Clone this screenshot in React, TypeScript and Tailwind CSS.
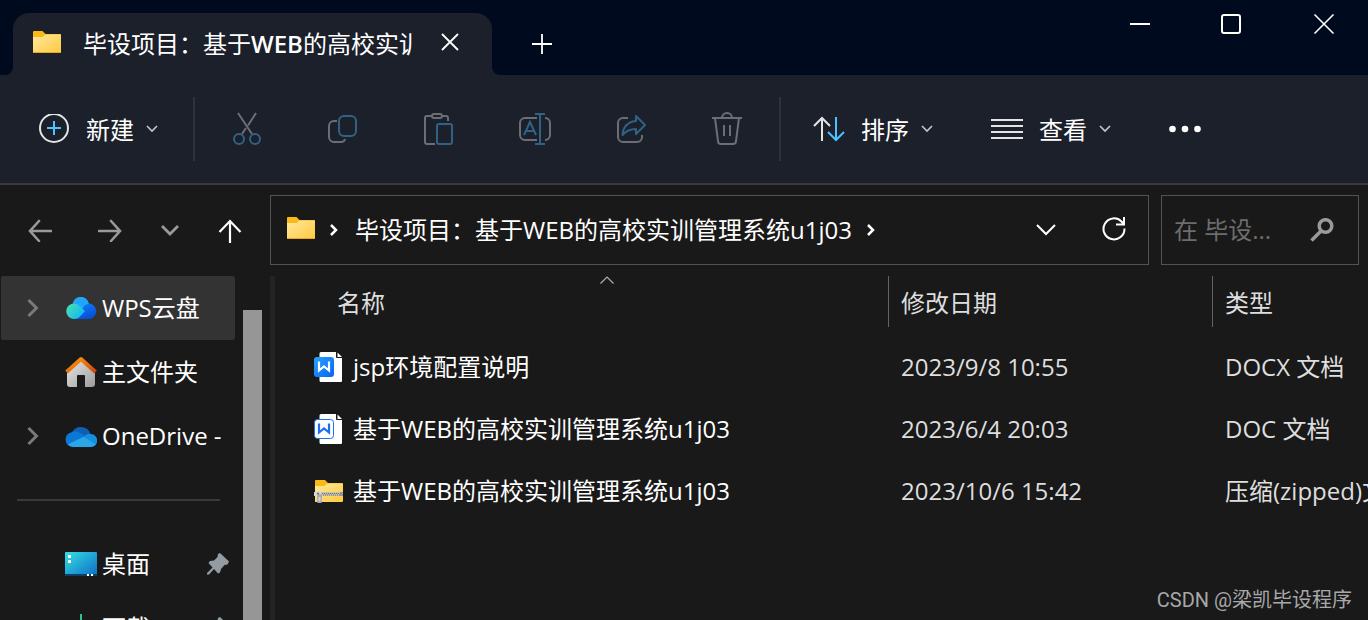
import type { ReactNode } from "react";

const places = [
    { id: "wps", label: "WPS云盘", icon: <WpsCloudIcon />, expandable: true, active: true, pinned: false },
    { id: "home", label: "主文件夹", icon: <HomeIcon />, expandable: false, active: false, pinned: false },
    { id: "onedrive", label: "OneDrive -", icon: <OneDriveIcon />, expandable: true, active: false, pinned: false },
];

const quickAccess = [
    { id: "desktop", label: "桌面", icon: <DesktopIcon />, expandable: false, active: false, pinned: true },
    { id: "downloads", label: "下载", icon: <DownloadIcon />, expandable: false, active: false, pinned: true },
];

const files = [
    { id: 1, name: "jsp环境配置说明", date: "2023/9/8 10:55", type: "DOCX 文档", icon: <DocIcon filled /> },
    { id: 2, name: "基于WEB的高校实训管理系统u1j03", date: "2023/6/4 20:03", type: "DOC 文档", icon: <DocIcon /> },
    { id: 3, name: "基于WEB的高校实训管理系统u1j03", date: "2023/10/6 15:42", type: "压缩(zipped)文件夹", icon: <ZipIcon /> },
];

export default function App() {
    return (
        <div className="relative flex h-screen flex-col overflow-hidden bg-[#191919] font-['Open_Sans','Noto_Sans_CJK_SC',sans-serif] text-2xl leading-8 text-white">
            <TitleBar />
            <Toolbar />
            <NavigationBar />
            <div className="flex min-h-0 flex-1">
                <Sidebar />
                <FileList />
            </div>
            <div className="absolute right-4 bottom-1 font-['Roboto','Noto_Sans_CJK_SC',sans-serif] text-xl leading-8 text-[#a8a8a8]">
                CSDN @梁凯毕设程序
            </div>
        </div>
    );
}

function TitleBar() {
    return (
        <header className="flex h-[75px] shrink-0 items-end bg-[#000a1e] pl-[5px]">
            <span className="size-2 bg-[#1b202b]">
                <span className="block size-2 rounded-br-lg bg-[#000a1e]" />
            </span>
            <div className="flex h-[62px] w-[479px] items-center rounded-t-2xl bg-[#1b202b] pb-1 pl-5">
                <FolderIcon />
                <span className="ml-[22px] w-[329px] overflow-hidden pt-1 whitespace-nowrap">
                    毕设项目：基于<span className="font-semibold">WEB</span>的高校实训管理系统u1j03
                </span>
                <button type="button" aria-label="关闭标签页" className="ml-7">
                    <svg className="size-5" viewBox="0 0 20 20" fill="none" stroke="currentColor" strokeWidth={1.8}>
                        <path d="M2 2l16 16M18 2L2 18" />
                    </svg>
                </button>
            </div>
            <span className="size-2 bg-[#1b202b]">
                <span className="block size-2 rounded-bl-lg bg-[#000a1e]" />
            </span>
            <button type="button" aria-label="新标签页" className="ml-8 self-center pt-3">
                <svg className="size-5" viewBox="0 0 20 20" fill="none" stroke="currentColor" strokeWidth={1.8}>
                    <path d="M10 0v20M0 10h20" />
                </svg>
            </button>
            <div className="ml-auto flex gap-[70px] self-start pt-[13px] pr-[33px]">
                <button type="button" aria-label="最小化">
                    <svg className="size-[22px]" viewBox="0 0 22 22" stroke="currentColor" strokeWidth={2}>
                        <path d="M1 11h20" />
                    </svg>
                </button>
                <button type="button" aria-label="最大化">
                    <svg className="size-[22px]" viewBox="0 0 22 22" fill="none" stroke="currentColor" strokeWidth={2}>
                        <rect x="1" y="2" width="18" height="18" rx="2" />
                    </svg>
                </button>
                <button type="button" aria-label="关闭">
                    <svg className="size-[22px]" viewBox="0 0 22 22" stroke="currentColor" strokeWidth={1.6}>
                        <path d="M1.500 1.500l19 19M20.500 1.500l-19 19" />
                    </svg>
                </button>
            </div>
        </header>
    );
}

function Toolbar() {
    return (
        <div className="flex h-[110px] shrink-0 items-center border-b-2 border-[#3a3a3a] bg-[#1b202b] pl-[39px]">
            <MenuButton label="新建">
                <svg className="mr-px size-[30px]" viewBox="0 0 30 30" fill="none" strokeWidth={2}>
                    <circle cx="15" cy="14" r="14" stroke="#e4e4e4" />
                    <path d="M15 7v14M8 14h14" stroke="#4cc2ff" />
                </svg>
            </MenuButton>
            <div className="ml-[35px] h-16 w-[2px] bg-[#2e323d]" />
            <div className="mx-1 flex">
                <ToolButton label="剪切">
                    <path d="M6 1l14 21M24 1l-8 12.500M14 16l-4 6" stroke="#6b6e75" />
                    <circle cx="7" cy="27" r="5" stroke="#2f6285" />
                    <circle cx="23" cy="27" r="5" stroke="#2f6285" />
                </ToolButton>
                <ToolButton label="复制">
                    <path d="M9 9H6a5 5 0 0 0-5 5v11a5 5 0 0 0 5 5h7a4 4 0 0 0 4-3" stroke="#6b6e75" />
                    <rect x="11" y="4" width="17" height="20" rx="5" stroke="#2f6285" />
                </ToolButton>
                <ToolButton label="粘贴">
                    <path d="M8 4H3a2 2 0 0 0-2 2v24a2 2 0 0 0 2 2h8M18 4h4a2 2 0 0 1 2 2v3" stroke="#6b6e75" />
                    <rect x="8" y="2" width="10" height="4" rx="2" stroke="#6b6e75" />
                    <rect x="13" y="12" width="15" height="20" rx="2" stroke="#2f6285" />
                </ToolButton>
                <ToolButton label="重命名">
                    <path d="M17 6H5a5 5 0 0 0-5 5v12a5 5 0 0 0 5 5h12M25 6a5 5 0 0 1 5 5v12a5 5 0 0 1-5 5" stroke="#6b6e75" />
                    <path d="M20 2v30M15 2h10M15 32h10M4 23l6-13 6 13M6 19h8" stroke="#2f6285" />
                </ToolButton>
                <ToolButton label="共享">
                    <path d="M12 6H7a5 5 0 0 0-5 5v14a5 5 0 0 0 5 5h14a5 5 0 0 0 5-5v-2" stroke="#6b6e75" />
                    <path d="M20 4l9 9-9 9v-5c-6 0-10 2-13.500 6C7 15 12 10 20 9z" stroke="#2f6285" strokeLinejoin="round" />
                </ToolButton>
                <ToolButton label="删除">
                    <path d="M0 6h30M10 6a5 5 0 0 1 10 0M3 6l3 23a3 3 0 0 0 3 3h12a3 3 0 0 0 3-3l3-23M12 13v11M18 13v11" stroke="#6b6e75" />
                </ToolButton>
            </div>
            <div className="h-16 w-[2px] bg-[#2e323d]" />
            <div className="ml-8 flex gap-[58px]">
                <MenuButton label="排序">
                    <svg className="h-7 w-8" viewBox="0 0 32 28" fill="none" strokeWidth={2}>
                        <path d="M9 26V3M1 11l8-8 8 8" stroke="#e4e4e4" />
                        <path d="M23 2v23M15 17l8 8 8-8" stroke="#4cc2ff" />
                    </svg>
                </MenuButton>
                <MenuButton label="查看">
                    <svg className="h-6 w-8" viewBox="0 0 32 24" stroke="#e4e4e4" strokeWidth={2}>
                        <path d="M0 3h32M0 9h32M0 15h32M0 21h32" />
                    </svg>
                </MenuButton>
                <button type="button" aria-label="更多">
                    <svg className="h-2 w-8" viewBox="0 0 32 8" fill="currentColor">
                        <circle cx="3.500" cy="4" r="3.300" />
                        <circle cx="16" cy="4" r="3.300" />
                        <circle cx="28.500" cy="4" r="3.300" />
                    </svg>
                </button>
            </div>
        </div>
    );
}

function MenuButton({ label, children }: { label: string; children: ReactNode }) {
    return (
        <button type="button" className="flex items-center gap-3 whitespace-nowrap">
            <span className="flex items-center gap-4">
                {children}
                <span className="pt-[2px]">{label}</span>
            </span>
            <svg className="size-3" viewBox="0 0 12 12" fill="none" stroke="#c4c6ca" strokeWidth={1.6}>
                <path d="M1 3l5 5 5-5" />
            </svg>
        </button>
    );
}

function ToolButton({ label, children }: { label: string; children: ReactNode }) {
    return (
        <button type="button" aria-label={label} className="flex w-24 justify-center">
            <svg className="h-[34px] w-[30px] overflow-visible" viewBox="0 0 30 34" fill="none" strokeWidth={2}>
                {children}
            </svg>
        </button>
    );
}

function NavigationBar() {
    return (
        <nav className="flex h-[91px] shrink-0 items-center pr-[9px] pb-[2px] pl-7">
            <button type="button" aria-label="后退" className="text-[#9a9a9a]">
                <svg className="size-6" viewBox="0 0 24 24" fill="none" stroke="currentColor" strokeWidth={2.600} strokeLinecap="round">
                    <path d="M23 13H2M11 3L2 13l9 10" />
                </svg>
            </button>
            <button type="button" aria-label="前进" className="ml-[46px] text-[#9a9a9a]">
                <svg className="size-6" viewBox="0 0 24 24" fill="none" stroke="currentColor" strokeWidth={2.600} strokeLinecap="round">
                    <path d="M1 13h21M13 3l9 10-9 10" />
                </svg>
            </button>
            <button type="button" aria-label="最近浏览的位置" className="ml-9 text-[#9a9a9a]">
                <svg className="size-6" viewBox="0 0 24 24" fill="none" stroke="currentColor" strokeWidth={2.800}>
                    <path d="M4 8l8 8 8-8" />
                </svg>
            </button>
            <button type="button" aria-label="向上" className="ml-9">
                <svg className="size-6 overflow-visible" viewBox="0 0 24 24" fill="none" stroke="currentColor" strokeWidth={2.200}>
                    <path d="M12 25V3M1.500 14L12 3l10.500 11" />
                </svg>
            </button>
            <div className="ml-7 flex h-[70px] min-w-0 flex-1 items-center border border-[#535353] pr-[22px] pl-4">
                <span className="pb-[3px]">
                    <FolderIcon />
                </span>
                <Crumb />
                <span className="whitespace-nowrap">毕设项目：基于WEB的高校实训管理系统u1j03</span>
                <Crumb />
                <button type="button" aria-label="历史记录" className="ml-auto">
                    <svg className="size-6" viewBox="0 0 24 24" fill="none" stroke="currentColor" strokeWidth={2}>
                        <path d="M3 7l9 9 9-9" />
                    </svg>
                </button>
                <button type="button" aria-label="刷新" className="ml-11">
                    <svg className="size-6 overflow-visible" viewBox="0 0 24 24" fill="none" stroke="currentColor" strokeWidth={2}>
                        <path d="M22.500 10.500A10.500 10.500 0 1 1 19.500 3.500L22 6.500M22 -1v7.500h-8" />
                    </svg>
                </button>
            </div>
            <div className="ml-3 flex h-[70px] w-[198px] items-center border border-[#535353] pr-6 pl-3">
                <input
                    type="text"
                    aria-label="搜索"
                    placeholder="在 毕设..."
                    className="min-w-0 flex-1 bg-transparent outline-none placeholder:text-[#6d6d6d]"
                />
                <svg className="size-6" viewBox="0 0 24 24" fill="none" stroke="#9a9a9a" strokeWidth={3.500}>
                    <circle cx="15.500" cy="8" r="6.300" />
                    <path d="M11 13L1.500 22.500" />
                </svg>
            </div>
        </nav>
    );
}

function Crumb() {
    return (
        <svg className="mx-[14px] size-3 shrink-0" viewBox="0 0 12 12" fill="none" stroke="currentColor" strokeWidth={2.500}>
            <path d="M2 1l5 5-5 5" />
        </svg>
    );
}

function Sidebar() {
    return (
        <aside className="flex shrink-0 overflow-hidden border-r-[5px] border-[#232323] pr-2">
            <ul className="w-[235px] pl-px">
                {places.map((place) => (
                    <SidebarItem key={place.id} place={place} />
                ))}
                <li className="flex h-16 items-center pr-[15px] pl-4">
                    <hr className="w-full border-t-2 border-[#3a3a3a]" />
                </li>
                {quickAccess.map((place) => (
                    <SidebarItem key={place.id} place={place} />
                ))}
            </ul>
            <div className="ml-2 w-[19px] pt-[34px]">
                <div className="h-full bg-[#969696]" />
            </div>
        </aside>
    );
}

function SidebarItem({ place }: { place: (typeof places)[0] }) {
    return (
        <li>
            <a
                href="#"
                className={`flex h-16 items-center rounded-xs pr-[6px] pl-[26px] whitespace-nowrap ${
                    place.active ? "bg-[#333333]" : ""
                }`}
            >
                <span className="mr-[26px] w-3">
                    {place.expandable && (
                        <svg className="h-[18px] w-3" viewBox="0 0 12 18" fill="none" stroke="#7a7a7a" strokeWidth={3}>
                            <path d="M1.500 1l8 8-8 8" />
                        </svg>
                    )}
                </span>
                {place.icon}
                <span className="ml-[5px]">{place.label}</span>
                {place.pinned && (
                    <svg className="ml-auto size-[22px]" viewBox="0 0 22 22" fill="#939ca3">
                        <path d="M13 0l9 8.500-1.500 3-3 .5-3.500 4-1 3.500-2 1-4-4.500L2 21.500H0V20l5.500-5.500L1.500 10l1.500-2 4-.5 3.500-3.500L11 1z" />
                    </svg>
                )}
            </a>
        </li>
    );
}

function FileList() {
    return (
        <main className="min-w-0 flex-1 overflow-hidden">
            <table className="w-full table-fixed text-left whitespace-nowrap">
                <colgroup>
                    <col className="w-[614px]" />
                    <col className="w-[324px]" />
                    <col />
                </colgroup>
                <thead className="text-[#dedede]">
                    <tr>
                        <th className="p-0 pl-[50px] font-normal">
                            <div className="h-[51px] border-r border-[#636363] pl-3">
                                <svg className="mx-auto h-[11px] w-7 pr-3" viewBox="0 0 16 11" fill="none" stroke="#b0b0b0" strokeWidth={1.200}>
                                    <path d="M1.500 7.500L8 1l6.500 6.500" />
                                </svg>
                                名称
                            </div>
                        </th>
                        <th className="p-0 font-normal">
                            <div className="h-[51px] border-r border-[#636363] pt-[11px] pl-3">修改日期</div>
                        </th>
                        <th className="p-0 font-normal">
                            <div className="h-[51px] pt-[11px] pl-3">类型</div>
                        </th>
                    </tr>
                    <tr className="h-[9px]" />
                </thead>
                <tbody>
                    {files.map((file) => (
                        <tr key={file.id} className="h-[62px]">
                            <td className="p-0 pl-[39px]">
                                <div className="flex items-center gap-[9px]">
                                    {file.icon}
                                    {file.name}
                                </div>
                            </td>
                            <td className="p-0 pl-3 text-[#dedede]">{file.date}</td>
                            <td className="overflow-hidden p-0 pl-3 text-[#dedede]">{file.type}</td>
                        </tr>
                    ))}
                </tbody>
            </table>
        </main>
    );
}

function FolderIcon() {
    return (
        <svg className="h-[22px] w-7 shrink-0" viewBox="0 0 28 22">
            <defs>
                <linearGradient id="folder" x1="0" y1="0" x2="1" y2="1">
                    <stop offset="0" stopColor="#ffe8a0" />
                    <stop offset="1" stopColor="#ffc93c" />
                </linearGradient>
            </defs>
            <path d="M0 1a1 1 0 0 1 1-1h8.500l3 3H27a1 1 0 0 1 1 1v6H0z" fill="#fbb917" />
            <path d="M0 6h9.500l3-2.500H28V21a1 1 0 0 1-1 1H1a1 1 0 0 1-1-1z" fill="url(#folder)" />
            <path d="M0 21h28a1 1 0 0 1-1 1H1a1 1 0 0 1-1-1z" fill="#e9a820" />
        </svg>
    );
}

function ZipIcon() {
    return (
        <svg className="h-6 w-[30px] shrink-0" viewBox="0 0 30 24">
            <path d="M1 2a1 1 0 0 1 1-1h9l3 3h14a1 1 0 0 1 1 1v6H1z" fill="#fbb917" />
            <path d="M1 7h9.500l3-2.500H29V22a1 1 0 0 1-1 1H1z" fill="url(#folder)" />
            <path d="M6 13h23v4H6z" fill="#c9c2b2" />
            <path d="M8 14.500h18M9 16h17" stroke="#6f6a60" strokeDasharray="1 1" />
            <rect x="26" y="13" width="3" height="4" fill="#8d969c" />
            <path d="M0 13h7v4H0z" fill="#d5d8da" />
            <rect x="3" y="15" width="5" height="9" rx="1.500" fill="#a9adb0" />
            <rect x="4.500" y="18" width="2" height="4" fill="#d5d8da" />
            <circle cx="4" cy="14.500" r="1" fill="#5f6366" />
        </svg>
    );
}

function DocIcon({ filled = false }: { filled?: boolean }) {
    return (
        <svg className="h-8 w-[30px] shrink-0" viewBox="0 0 30 32">
            <defs>
                <linearGradient id="doc" x1="0" y1="0" x2="1" y2="1">
                    <stop offset="0" stopColor="#26a4ff" />
                    <stop offset="1" stopColor="#0a62f5" />
                </linearGradient>
            </defs>
            <path d="M7 1h15v5a1 1 0 0 0 1 1h5v23a1 1 0 0 1-1 1H7a1.500 1.500 0 0 1-1.500-1.500v-27A1.500 1.500 0 0 1 7 1z" fill="#fff" />
            <path d="M23.500 1.500v4.500h4.500z" fill="#fff" />
            {filled ? (
                <rect x="0" y="6" width="20" height="20" rx="3" fill="url(#doc)" />
            ) : (
                <rect x="0.500" y="6.500" width="19" height="19" rx="3" fill="#fff" stroke="#1a6ff5" />
            )}
            <path
                d="M5 10.500v9l5-4 5 4v-9"
                fill="none"
                stroke={filled ? "#fff" : "#1a6ff5"}
                strokeWidth={2.200}
            />
        </svg>
    );
}

function WpsCloudIcon() {
    return (
        <svg className="h-[22px] w-8 shrink-0" viewBox="0 0 32 22">
            <defs>
                <linearGradient id="cloud-left" x1="0" y1="0" x2="1" y2="0.600">
                    <stop offset="0" stopColor="#4be3a8" />
                    <stop offset="1" stopColor="#12b8fb" />
                </linearGradient>
                <linearGradient id="cloud-right" x1="0" y1="0" x2="0.500" y2="1">
                    <stop offset="0" stopColor="#0b86ff" />
                    <stop offset="1" stopColor="#0a4fd6" />
                </linearGradient>
            </defs>
            <path d="M9 22l10-14a7.500 7.500 0 0 1 4.500-1.500A7.700 7.700 0 0 1 23.500 22z" fill="url(#cloud-right)" />
            <path d="M7.500 7.500A8.300 8.300 0 0 1 24 7c-3 0-5 1.500-6 4l-2 2z" fill="#22a6fb" />
            <path d="M9 22A7.700 7.700 0 1 1 14.500 8.900L20 14l-5 5.500C13.500 21 12 22 9 22z" fill="url(#cloud-left)" />
        </svg>
    );
}

function HomeIcon() {
    return (
        <svg className="size-8 shrink-0" viewBox="0 0 32 32">
            <defs>
                <linearGradient id="wall" x1="0" y1="0" x2="1" y2="1">
                    <stop offset="0" stopColor="#e8e8e8" />
                    <stop offset="1" stopColor="#9c9c9c" />
                </linearGradient>
                <linearGradient id="roof" x1="0" y1="0" x2="1" y2="1">
                    <stop offset="0" stopColor="#ff9a10" />
                    <stop offset="1" stopColor="#d3460a" />
                </linearGradient>
            </defs>
            <path d="M2 15L16 3l14 12v13a3 3 0 0 1-3 3h-7V20a1 1 0 0 0-1-1h-6a1 1 0 0 0-1 1v11H5a3 3 0 0 1-3-3z" fill="url(#wall)" />
            <path d="M1.500 16L16 3l14.500 13" fill="none" stroke="url(#roof)" strokeWidth={3.800} strokeLinejoin="round" />
        </svg>
    );
}

function OneDriveIcon() {
    return (
        <svg className="h-[21px] w-8 shrink-0" viewBox="0 0 32 21">
            <path d="M7 6.500A10 10 0 0 1 25.500 8L19 12z" fill="#0f5fb5" />
            <path d="M6.500 6.200c3-1.500 6.500-.7 9 .8l5 3.500L3 19A7.500 7.500 0 0 1 6.500 6.200z" fill="#0a78d4" />
            <path d="M19 10.500c2-2 4.500-3 6.500-2.500a6.600 6.600 0 0 1 5 11z" fill="#1490df" />
            <path d="M2.500 18.500L19 10.500l12 8a6 6 0 0 1-4.500 2.500H7.500a7.500 7.500 0 0 1-5-2.500z" fill="#28a8ea" />
        </svg>
    );
}

function DesktopIcon() {
    return (
        <svg className="h-6 w-8 shrink-0" viewBox="0 0 32 24">
            <defs>
                <linearGradient id="desktop" x1="0" y1="0" x2="1" y2="1">
                    <stop offset="0" stopColor="#35dfe4" />
                    <stop offset="1" stopColor="#0d6cc4" />
                </linearGradient>
            </defs>
            <rect width="32" height="24" rx="1" fill="url(#desktop)" />
            <path d="M0 22h32v1a1 1 0 0 1-1 1H1a1 1 0 0 1-1-1z" fill="#0c3f66" />
            <path d="M3 3h3v3H3zM3 8h3v3H3zM22 22h2v2h-2zM26 22h2v2h-2z" fill="#fff" />
        </svg>
    );
}

function DownloadIcon() {
    return (
        <svg className="size-8 shrink-0" viewBox="0 0 32 32" fill="none" stroke="#2fc58a" strokeWidth={2}>
            <path d="M16 2v20M7 13l9 9 9-9M4 30h24" />
        </svg>
    );
}
